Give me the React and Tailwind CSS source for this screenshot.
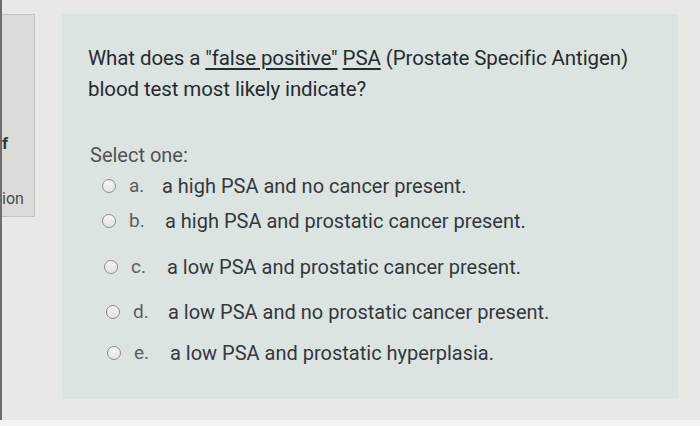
const OPTIONS = [
  { key: 'a', text: 'a high PSA and no cancer present.', row: 'mt-[9px] pl-[14px]', label: 'w-[33px]' },
  { key: 'b', text: 'a high PSA and prostatic cancer present.', row: 'mt-[13px] pl-[14px]', label: 'w-[36px]' },
  { key: 'c', text: 'a low PSA and prostatic cancer present.', row: 'mt-[24px] pl-[16px]', label: 'w-[36px]' },
  { key: 'd', text: 'a low PSA and no prostatic cancer present.', row: 'mt-[23px] pl-[18px]', label: 'w-[35px]' },
  { key: 'e', text: 'a low PSA and prostatic hyperplasia.', row: 'mt-[19px] pl-[19px]', label: 'w-[36px]' },
];

function Radio() {
  return (
    <span className="w-[14px] h-[14px] rounded-full border-[1.5px] border-[#8a8d8c] bg-gradient-to-b from-[#f6f7f6] to-[#e2e5e4] shrink-0" />
  );
}

export default function App() {
  return (
    <div className="w-[700px] h-[426px] bg-[#e9e8e4] overflow-hidden relative font-['Roboto',sans-serif] flex items-start">
      {/* screen edge */}
      <div className="w-[2px] h-full bg-[#6d6d6b] shrink-0" />

      {/* left nav block */}
      <div className="mt-[14px] w-[33px] h-[203px] bg-[#dcdbd7] border border-l-0 border-[#c3c3bf] shrink-0 relative">
        <span className="absolute left-0 top-[120px] text-[17px] font-bold text-[#3a3a38] leading-none">f</span>
        <span className="absolute left-0 top-[176px] text-[16px] text-[#4a4c4c] leading-none">ion</span>
      </div>

      {/* question panel */}
      <div className="ml-[27px] mt-[14px] w-[616px] h-[385px] bg-[#dce4e1] pl-[26px] pt-[29px]">
        <div className="text-[20.5px] leading-[31px] text-[#262b2f] tracking-[-0.1px]">
          What does a <span className="underline underline-offset-[3px]">"false positive"</span>{' '}
          <span className="underline underline-offset-[3px]">PSA</span> (Prostate Specific Antigen)
          <br />
          blood test most likely indicate?
        </div>

        <div className="mt-[39px] pl-[2px] text-[20px] leading-[22px] text-[#4f5356]">Select one:</div>

        <div className="flex flex-col">
          {OPTIONS.map((o) => (
            <div key={o.key} className={`flex items-center h-[22px] ${o.row}`}>
              <Radio />
              <span className={`ml-[13px] text-[19px] text-[#5a5e60] ${o.label}`}>{o.key}.</span>
              <span className="text-[20px] text-[#33383c]">{o.text}</span>
            </div>
          ))}
        </div>
      </div>

      <div className="absolute left-0 right-0 bottom-0 h-[6px] bg-[#f3f3f1]" />
    </div>
  );
}
